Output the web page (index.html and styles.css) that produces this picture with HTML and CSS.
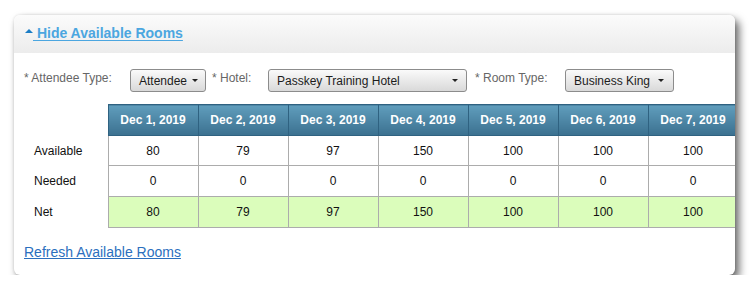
FILE: index.html
```html
<!DOCTYPE html>
<html>
<head>
<meta charset="utf-8">
<link rel="stylesheet" href="styles.css">
</head>
<body>
<div class="card">
  <div class="card-head">
    <a class="toggle" href="#"><span class="caret-up"></span><span class="toggle-text">&nbsp;Hide Available Rooms</span></a>
  </div>
  <div class="card-body">
    <div class="filters">
      <span class="label label-att">* Attendee Type:</span>
      <span class="dd dd-att">Attendee<span class="arrow"></span></span>
      <span class="label label-hotel">* Hotel:</span>
      <span class="dd dd-hotel">Passkey Training Hotel<span class="arrow"></span></span>
      <span class="label label-room">* Room Type:</span>
      <span class="dd dd-room">Business King<span class="arrow"></span></span>
    </div>
    <table class="grid">
      <colgroup>
        <col class="c-label">
        <col class="c-day"><col class="c-day"><col class="c-day"><col class="c-day"><col class="c-day"><col class="c-day"><col class="c-day">
      </colgroup>
      <thead>
        <tr>
          <th class="blank"></th>
          <th>Dec 1, 2019</th><th>Dec 2, 2019</th><th>Dec 3, 2019</th><th>Dec 4, 2019</th><th>Dec 5, 2019</th><th>Dec 6, 2019</th><th>Dec 7, 2019</th>
        </tr>
      </thead>
      <tbody>
        <tr class="first">
          <td class="rl">Available</td>
          <td>80</td><td>79</td><td>97</td><td>150</td><td>100</td><td>100</td><td>100</td>
        </tr>
        <tr>
          <td class="rl">Needed</td>
          <td>0</td><td>0</td><td>0</td><td>0</td><td>0</td><td>0</td><td>0</td>
        </tr>
        <tr class="net">
          <td class="rl">Net</td>
          <td>80</td><td>79</td><td>97</td><td>150</td><td>100</td><td>100</td><td>100</td>
        </tr>
      </tbody>
    </table>
    <a class="refresh" href="#">Refresh Available Rooms</a>
  </div>
</div>
</body>
</html>
```

FILE: styles.css
```css
html, body {
  margin: 0;
  padding: 0;
  background: #ffffff;
}
body {
  font-family: "Liberation Sans", Arial, sans-serif;
  font-size: 12px;
  color: #222;
}
.card {
  margin: 15px 0 0 14px;
  width: 721px;
  height: 260px;
  border-radius: 6px;
  background: #fff;
  overflow: hidden;
  box-shadow: 4px 5px 9px rgba(0, 0, 0, 0.6), 0 0 3px rgba(0, 0, 0, 0.12);
}
.card-head {
  height: 38px;
  display: flex;
  align-items: center;
  padding-left: 11px;
  background: linear-gradient(#fbfbfb, #ececec);
}
.toggle {
  display: flex;
  align-items: center;
  color: #4ba6e0;
  font-weight: bold;
  font-size: 14px;
  text-decoration: none;
  margin-top: -3px;
}
.caret-up {
  width: 0;
  height: 0;
  border-left: 4px solid transparent;
  border-right: 4px solid transparent;
  border-bottom: 4px solid #1b7dc5;
  margin-bottom: 4px;
}
.toggle-text {
  text-decoration: underline;
  text-underline-offset: 2px;
}
.card-body {
  padding: 16px 0 0 10px;
}
.filters {
  display: flex;
  align-items: center;
  height: 23px;
}
.label {
  color: #666;
  font-size: 12px;
  margin-top: -5px;
}
.label-att { width: 106px; }
.label-hotel { width: 56px; margin-left: 6px; }
.label-room { width: 90px; margin-left: 8px; }
.dd {
  box-sizing: border-box;
  height: 23px;
  display: flex;
  align-items: center;
  justify-content: space-between;
  border: 1px solid #8c8c8c;
  border-radius: 3px;
  background: linear-gradient(#fafafa, #d9d9d9);
  color: #1c1c1c;
  font-size: 12px;
  padding: 1px 8px 0 8px;
}
.dd-att { width: 76px; padding-right: 7px; }
.dd-hotel { width: 199px; padding-right: 8px; }
.dd-room { width: 109px; padding-right: 9px; }
.arrow {
  width: 0;
  height: 0;
  border-left: 3px solid transparent;
  border-right: 3px solid transparent;
  border-top: 3px solid #222;
  margin-bottom: 1px;
}
.grid {
  margin-top: 12px;
  border-collapse: collapse;
  table-layout: fixed;
  width: 714px;
}
.c-label { width: 84px; }
.c-day { width: 90px; }
.grid th {
  height: 30px;
  padding: 0;
  color: #fff;
  font-weight: bold;
  font-size: 12px;
  background: linear-gradient(#609dbc, #3b708f);
  border: 1px solid #2f6281;
  text-align: center;
}
.grid th.blank {
  background: none;
  border: none;
}
.grid td {
  height: 30px;
  padding: 0;
  text-align: center;
  border: 1px solid #acacac;
  font-size: 12px;
  color: #111;
}
.grid tr.first td {
  height: 29px;
}
.grid td.rl {
  border: none;
  text-align: left;
  padding-left: 10px;
  border-right: 1px solid #acacac;
}
.grid tr.net td {
  background: #dbfdbb;
}
.grid tr.net td.rl {
  background: none;
}
.refresh {
  display: inline-block;
  margin-top: 16px;
  font-size: 14px;
  color: #2b6fbe;
  text-decoration: underline;
}
```
